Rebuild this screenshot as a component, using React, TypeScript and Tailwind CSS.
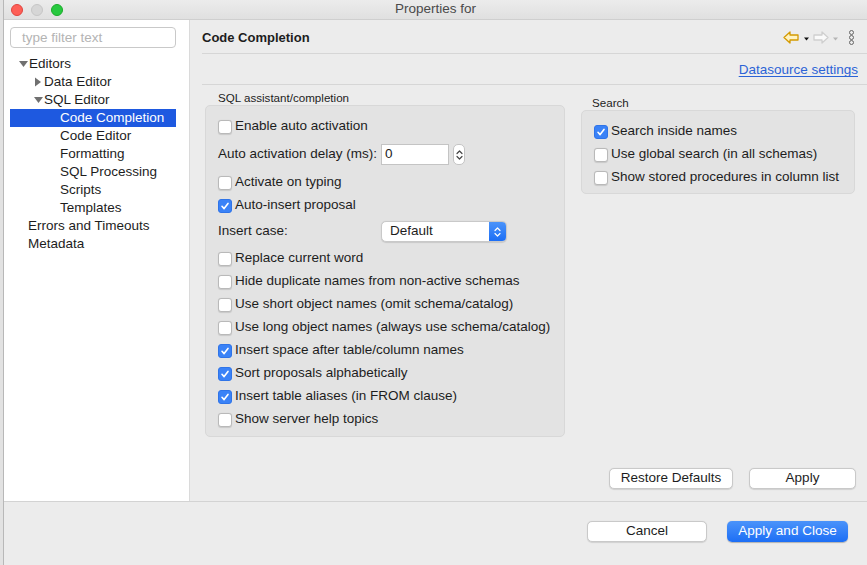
import React from "react";

const Box = ({ checked }: { checked?: boolean }) =>
  checked ? (
    <span className="w-[14px] h-[14px] rounded-[3px] bg-[#3a82f7] border border-[#2f74e8] flex items-center justify-center shrink-0">
      <svg width="10" height="10" viewBox="0 0 10 10">
        <path d="M2 5.3 L4.1 7.6 L8 2.4" fill="none" stroke="white" strokeWidth="1.6" strokeLinecap="round" strokeLinejoin="round" />
      </svg>
    </span>
  ) : (
    <span className="w-[14px] h-[14px] rounded-[3px] bg-white border border-[#b9b9b9] shadow-[0_0.5px_1px_rgba(0,0,0,0.12)] shrink-0" />
  );

const Check = ({ label, checked }: { label: string; checked?: boolean }) => (
  <div className="flex items-center gap-[3px] h-[23px]">
    <Box checked={checked} />
    <span>{label}</span>
  </div>
);

const Down = () => (
  <svg width="11" height="8" viewBox="0 0 11 8" className="shrink-0">
    <polygon points="1,1 10,1 5.5,7" fill="#707070" />
  </svg>
);

const Right = () => (
  <svg width="11" height="10" viewBox="0 0 11 10" className="shrink-0">
    <polygon points="2,0.5 8,5 2,9.5" fill="#707070" />
  </svg>
);

const Chevrons = ({ color }: { color: string }) => (
  <svg width="7" height="12" viewBox="0 0 7 12">
    <path d="M1 4.5 L3.5 2 L6 4.5 M1 7.5 L3.5 10 L6 7.5" fill="none" stroke={color} strokeWidth="1.2" strokeLinecap="round" strokeLinejoin="round" />
  </svg>
);

const Btn = ({ label, w, primary }: { label: string; w: string; primary?: boolean }) => (
  <div
    className={
      primary
        ? `${w} h-[21px] rounded-[5px] bg-gradient-to-b from-[#4a93fa] to-[#1c6ef5] text-white flex items-center justify-center shadow-[0_0.5px_1px_rgba(0,0,0,0.25)]`
        : `${w} h-[21px] rounded-[5px] bg-white border border-[#c9c9c9] text-[#1d1d1d] flex items-center justify-center shadow-[0_0.5px_1px_rgba(0,0,0,0.12)]`
    }
  >
    {label}
  </div>
);

export default function App() {
  return (
    <div className="w-[867px] h-[565px] flex overflow-hidden bg-[#ececec] text-[13.5px] text-[#1d1d1d] font-['Liberation_Sans',Arial,sans-serif]">
      <div className="w-[3px] bg-[#e2e2e2]" />
      <div className="flex-1 flex flex-col border-l border-[#b8b8b8]">
        {/* title bar */}
        <div className="h-[20px] flex items-center pl-[7px] relative bg-gradient-to-b from-[#ececec] to-[#e0e0e0] border-b border-[#cfcfcf]">
          <div className="flex gap-[8px]">
            <span className="w-[12px] h-[12px] rounded-full bg-[#fe5f57] border border-[#e0443e]" />
            <span className="w-[12px] h-[12px] rounded-full bg-[#d6d6d6] border border-[#c6c6c6]" />
            <span className="w-[12px] h-[12px] rounded-full bg-[#28c940] border border-[#1aab29]" />
          </div>
          <div className="absolute inset-0 flex items-center justify-center text-[13.5px] text-[#4a4a4a]">Properties for</div>
        </div>

        <div className="flex-1 flex">
          {/* tree */}
          <div className="w-[186px] bg-white border-r border-[#dadada] flex flex-col">
            <div className="ml-[6px] w-[166px] mt-[7px] h-[21px] rounded-[4px] border border-[#c9c9c9] flex items-center pl-[11px] pt-[1px] text-[#b4b4b4]">
              type filter text
            </div>
            <div className="mt-[7px] flex flex-col">
              <div className="ml-[6px] w-[166px] h-[18px] flex items-center pl-[8px]">
                <Down />
                <span>Editors</span>
              </div>
              <div className="ml-[6px] w-[166px] h-[18px] flex items-center pl-[23px]">
                <Right />
                <span>Data Editor</span>
              </div>
              <div className="ml-[6px] w-[166px] h-[18px] flex items-center pl-[23px]">
                <Down />
                <span>SQL Editor</span>
              </div>
              <div className="ml-[6px] w-[166px] h-[18px] flex items-center pl-[50px] bg-[#1e59e0] text-white">Code Completion</div>
              {["Code Editor", "Formatting", "SQL Processing", "Scripts", "Templates"].map((t) => (
                <div key={t} className="ml-[6px] w-[166px] h-[18px] flex items-center pl-[50px]">
                  {t}
                </div>
              ))}
              <div className="ml-[6px] w-[166px] h-[18px] flex items-center pl-[18px]">Errors and Timeouts</div>
              <div className="ml-[6px] w-[166px] h-[18px] flex items-center pl-[18px]">Metadata</div>
            </div>
          </div>

          {/* page */}
          <div className="flex-1 flex flex-col">
            <div className="h-[33px] flex items-center justify-between pl-[12px] pr-[12px] pt-[2px]">
              <span className="font-bold text-[13px] pt-[1px]">Code Completion</span>
              <div className="flex items-center">
                <svg width="16" height="13" viewBox="0 0 16 13">
                  <path d="M1 6.5 L7 1 L7 4 L15 4 L15 9 L7 9 L7 12 Z" fill="#fff3c2" stroke="#d49a00" strokeWidth="1.3" strokeLinejoin="round" />
                </svg>
                <svg width="9" height="6" viewBox="0 0 9 6" className="ml-[3px] mt-[2px]">
                  <polygon points="2,1.5 7,1.5 4.5,4.5" fill="#111" />
                </svg>
                <svg width="16" height="13" viewBox="0 0 16 13" className="ml-[2px]">
                  <path d="M15 6.5 L9 1 L9 4 L1 4 L1 9 L9 9 L9 12 Z" fill="#fafafa" stroke="#cfcfcf" strokeWidth="1.3" strokeLinejoin="round" />
                </svg>
                <svg width="9" height="6" viewBox="0 0 9 6" className="ml-[2px] mt-[2px]">
                  <polygon points="2,1.5 7,1.5 4.5,4.5" fill="#b5b5b5" />
                </svg>
                <svg width="7" height="15" viewBox="0 0 7 15" className="ml-[8px]">
                  <circle cx="3.5" cy="2.5" r="2" fill="none" stroke="#666" strokeWidth="1" />
                  <circle cx="3.5" cy="7.5" r="2" fill="none" stroke="#666" strokeWidth="1" />
                  <circle cx="3.5" cy="12.5" r="2" fill="none" stroke="#666" strokeWidth="1" />
                </svg>
              </div>
            </div>
            <div className="ml-[12px] border-t border-[#d6d6d6]" />
            <div className="h-[30px] flex items-center justify-end pr-[9px] pt-[3px]">
              <span className="text-[#2b63d6] underline underline-offset-2">Datasource settings</span>
            </div>
            <div className="ml-[12px] border-t border-[#d6d6d6]" />

            <div className="flex pl-[15px] gap-[16px]">
              <div className="w-[360px] pt-[6px] flex flex-col">
                <div className="ml-[13px] h-[14px] flex items-center text-[11.6px]">SQL assistant/completion</div>
                <div className="rounded-[5px] bg-[#e3e3e3] border border-[#d8d8d8] pt-[9px] pb-[5px] pl-[12px] flex flex-col">
                  <Check label="Enable auto activation" />
                  <div className="h-[33px] flex items-center">
                    <span className="w-[163px]">Auto activation delay (ms):</span>
                    <div className="w-[68px] h-[21px] bg-white border border-[#c4c4c4] flex items-center pl-[3px]">0</div>
                    <div className="ml-[4px] w-[12px] h-[21px] rounded-[5px] bg-white border border-[#c4c4c4] flex items-center justify-center">
                      <Chevrons color="#444" />
                    </div>
                  </div>
                  <Check label="Activate on typing" />
                  <Check label="Auto-insert proposal" checked />
                  <div className="h-[30px] flex items-center pb-[1px]">
                    <span className="w-[163px]">Insert case:</span>
                    <div className="w-[126px] h-[21px] rounded-[5px] bg-white border border-[#c9c9c9] shadow-[0_0.5px_1px_rgba(0,0,0,0.12)] flex items-center overflow-hidden">
                      <span className="flex-1 pl-[8px]">Default</span>
                      <div className="w-[17px] h-full bg-gradient-to-b from-[#4a93fa] to-[#1c6ef5] flex items-center justify-center">
                        <Chevrons color="#fff" />
                      </div>
                    </div>
                  </div>
                  <Check label="Replace current word" />
                  <Check label="Hide duplicate names from non-active schemas" />
                  <Check label="Use short object names (omit schema/catalog)" />
                  <Check label="Use long object names (always use schema/catalog)" />
                  <Check label="Insert space after table/column names" checked />
                  <Check label="Sort proposals alphabetically" checked />
                  <Check label="Insert table aliases (in FROM clause)" checked />
                  <Check label="Show server help topics" />
                </div>
              </div>
              <div className="w-[274px] pt-[11px] flex flex-col">
                <div className="ml-[11px] h-[14px] flex items-center text-[11.6px]">Search</div>
                <div className="rounded-[5px] bg-[#e3e3e3] border border-[#d8d8d8] pt-[9px] pb-[4px] pl-[12px] flex flex-col">
                  <Check label="Search inside names" checked />
                  <Check label="Use global search (in all schemas)" />
                  <Check label="Show stored procedures in column list" />
                </div>
              </div>
            </div>

            <div className="flex-1" />
            <div className="flex justify-end gap-[16px] pr-[11px] pb-[12px]">
              <Btn label="Restore Defaults" w="w-[124px]" />
              <Btn label="Apply" w="w-[107px]" />
            </div>
          </div>
        </div>

        {/* dialog buttons */}
        <div className="h-[64px] border-t border-[#d3d3d3] flex justify-end items-start gap-[20px] pr-[19px] pt-[19px]">
          <Btn label="Cancel" w="w-[120px]" />
          <Btn label="Apply and Close" w="w-[121px]" primary />
        </div>
      </div>
    </div>
  );
}
